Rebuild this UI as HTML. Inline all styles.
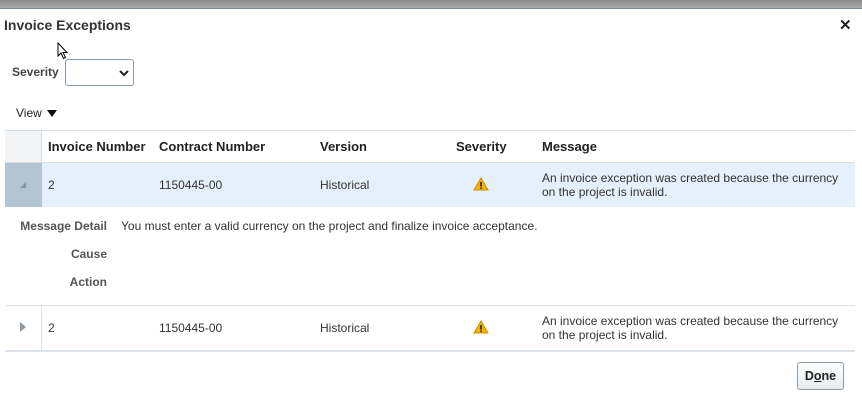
<!DOCTYPE html>
<html><head><style>
*{margin:0;padding:0;box-sizing:border-box}
body{width:862px;height:400px;background:#fff;font-family:"Liberation Sans",Arial,sans-serif;color:#333;position:relative;overflow:hidden;font-size:12px}
.abs{position:absolute}
.top{left:0;top:0;width:862px;height:9px;background:linear-gradient(#8a8a8a,#a9a9a9);border-bottom:1px solid #7d8b99}
.title{left:4px;top:17px;font-size:14px;font-weight:bold;color:#333}
.close{left:839px;top:16px;font-size:15px;font-weight:bold;color:#222}
.sev{left:12px;top:65px;font-weight:bold;font-size:12px;color:#444}
.sel{left:65px;top:59px;width:69px;height:27px;border:1px solid #8b9aa8;border-radius:3px;background:#fff}
.view{left:16px;top:106px;font-size:12px;color:#222}
.hdr{left:5px;top:130px;width:850px;height:33px;border-top:1px solid #d6dfe6;border-bottom:1px solid #d6dfe6;background:#fff}
.th{top:139px;font-weight:bold;font-size:13px;color:#222}
.row1{left:5px;top:163px;width:850px;height:44px;background:#e4f0fb}
.td{font-size:12px;color:#333}
.lc{left:5px;width:37px}
.line{left:5px;width:850px;height:1px;background:#dde3e8}
.lbl{font-weight:bold;color:#555;text-align:right;width:107px;left:0}
.btn{left:797px;top:362px;width:47px;height:28px;border:1px solid #8a9aa8;border-radius:3px;background:linear-gradient(#fdfdfd,#e8ecef);font-weight:bold;font-size:12.5px;color:#222;text-align:center;line-height:26px}
</style></head><body>
<div class="abs top"></div>
<div class="abs title">Invoice Exceptions</div>
<div class="abs close">✕</div>
<svg class="abs" style="left:57px;top:42px" width="12" height="18" viewBox="0 0 12 18"><path d="M1 1 L1 14 L4 11 L6.5 16.5 L8.5 15.5 L6 10.5 L10 10.5 Z" fill="#fff" stroke="#000" stroke-width="1"/></svg>
<div class="abs sev">Severity</div>
<div class="abs sel"><svg class="abs" style="left:53px;top:9px" width="10" height="8" viewBox="0 0 10 8"><path d="M1 2 L5 6 L9 2" stroke="#222" stroke-width="2" fill="none"/></svg></div>
<div class="abs view">View</div>
<svg class="abs" style="left:47px;top:110px" width="10" height="8"><path d="M0 0 L10 0 L5 7 Z" fill="#111"/></svg>
<div class="abs hdr"><div class="abs" style="left:0;top:0;width:37px;height:31px;background:#f2f4f6;border-right:1px solid #d6dfe6"></div></div>
<div class="abs th" style="left:48px">Invoice Number</div>
<div class="abs th" style="left:159px">Contract Number</div>
<div class="abs th" style="left:320px">Version</div>
<div class="abs th" style="left:456px">Severity</div>
<div class="abs th" style="left:542px">Message</div>
<div class="abs row1"></div>
<div class="abs lc" style="top:163px;height:44px;background:#b3c4d2"></div>
<svg class="abs" style="left:19px;top:181px" width="8" height="8"><path d="M7 1 L7 7 L1 7 Z" fill="#8596a3"/></svg>
<div class="abs td" style="left:48px;top:178px">2</div>
<div class="abs td" style="left:159px;top:178px">1150445-00</div>
<div class="abs td" style="left:320px;top:178px">Historical</div>
<svg class="abs" style="left:473px;top:177px" width="16" height="14" viewBox="0 0 16 14"><path d="M8 1 L15 13 L1 13 Z" fill="#f5b400" stroke="#c98f00" stroke-width="1"/><rect x="7.2" y="5" width="1.6" height="4.5" fill="#222"/><rect x="7.2" y="10.5" width="1.6" height="1.5" fill="#222"/></svg>
<div class="abs td" style="left:542px;top:171px;line-height:14px">An invoice exception was created because the currency<br>on the project is invalid.</div>
<div class="abs td lbl" style="top:219px">Message Detail</div>
<div class="abs td" style="left:121px;top:219px">You must enter a valid currency on the project and finalize invoice acceptance.</div>
<div class="abs td lbl" style="top:247px">Cause</div>
<div class="abs td lbl" style="top:275px">Action</div>
<div class="abs line" style="top:305px"></div>
<div class="abs lc" style="top:306px;height:44px;border-right:1px solid #dde3e8"></div>
<svg class="abs" style="left:20px;top:322px" width="6" height="10"><path d="M0 0 L6 5 L0 10 Z" fill="#8f9aa3"/></svg>
<div class="abs td" style="left:48px;top:321px">2</div>
<div class="abs td" style="left:159px;top:321px">1150445-00</div>
<div class="abs td" style="left:320px;top:321px">Historical</div>
<svg class="abs" style="left:473px;top:320px" width="16" height="14" viewBox="0 0 16 14"><path d="M8 1 L15 13 L1 13 Z" fill="#f5b400" stroke="#c98f00" stroke-width="1"/><rect x="7.2" y="5" width="1.6" height="4.5" fill="#222"/><rect x="7.2" y="10.5" width="1.6" height="1.5" fill="#222"/></svg>
<div class="abs td" style="left:542px;top:314px;line-height:14px">An invoice exception was created because the currency<br>on the project is invalid.</div>
<div class="abs" style="left:5px;top:350px;width:850px;height:2px;background:#dde3e8"></div>
<div class="abs btn">D<u>o</u>ne</div>
</body></html>
